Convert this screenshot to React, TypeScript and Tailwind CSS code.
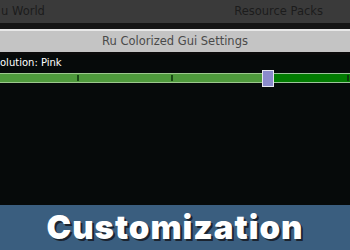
export default function App() {
  return (
    <div className="w-[350px] h-[250px] overflow-hidden bg-[#060a0a] flex flex-col font-['DejaVu_Sans',sans-serif]">
      {/* top tabs */}
      <div className="h-[23px] bg-[#3a3a3a] flex items-center justify-between pl-[1px] pr-[27px] text-[11.5px] text-[#1c1c1c]">
        <span>u World</span>
        <span>Resource Packs</span>
      </div>
      <div className="h-[6px] bg-[#141414]" />
      <div className="h-[2px] bg-[#e8e8e8]" />
      <div className="h-[21px] bg-[#c4c4c4] flex items-center justify-center text-[11.5px] text-[#4a4a4a]">
        Ru Colorized Gui Settings
      </div>
      <div className="h-[3px] bg-[#0b0b0b]" />

      {/* setting */}
      <div className="h-[16px] flex items-center text-[10px] text-white leading-none">olution: Pink</div>
      <div className="relative mt-[2px] h-[10px] flex">
        <div className="relative w-[262px] h-[10px] bg-[#4e9a3c] border-y border-[#9cc88e]">
          <div className="absolute left-[77px] top-[1px] w-[2px] h-[6px] bg-[#184a14]" />
          <div className="absolute left-[171px] top-[1px] w-[2px] h-[6px] bg-[#184a14]" />
        </div>
        <div className="relative flex-1 h-[10px] bg-[#027c02] border-y border-[#9cc49c]">
          <div className="absolute right-[1px] top-[1px] w-[2px] h-[6px] bg-[#0d3a0d]" />
        </div>
        <div className="absolute left-[262px] top-[-3px] w-[12px] h-[17px] bg-[#8b8bcc] border border-[#e6e6f0]" />
      </div>

      <div className="flex-1" />

      {/* banner */}
      <div className="h-[45px] bg-[#3a5e7f] flex items-center justify-center">
        <span className="font-['Inter',sans-serif] font-black text-[33px] text-white tracking-[1px] [text-shadow:2px_2px_0_#1b2430]">
          Customization
        </span>
      </div>
    </div>
  );
}
